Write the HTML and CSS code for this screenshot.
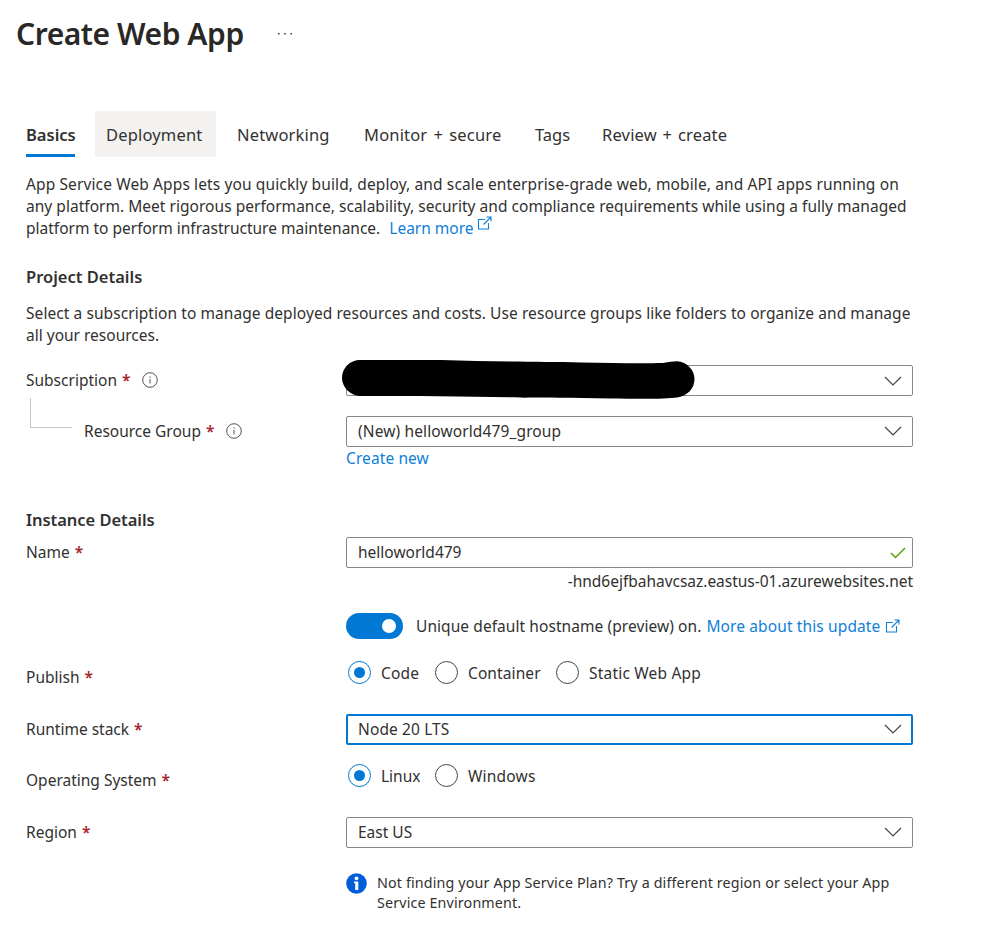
FILE: index.html
```html
<!DOCTYPE html>
<html lang="en">
<head>
    <meta charset="UTF-8">
    <meta name="viewport" content="width=device-width, initial-scale=1.0">
    <title>Create Web App</title>
    <link rel="stylesheet" href="styles.css">
</head>
<body>
    <header class="page-header">
        <h1>Create Web App</h1>
        <svg class="more" width="16" height="4" viewBox="0 0 16 4"><path d="M1 1h1.6v1.6H1zM7.2 1h1.6v1.6H7.2zM13.4 1h1.6v1.6h-1.6z" fill="#444"/></svg>
    </header>

    <nav class="tabs">
        <a class="tab active"><span>Basics</span></a>
        <a class="tab hover"><span>Deployment</span></a>
        <a class="tab networking"><span>Networking</span></a>
        <a class="tab monitor"><span>Monitor + secure</span></a>
        <a class="tab tags"><span>Tags</span></a>
        <a class="tab review"><span>Review + create</span></a>
    </nav>

    <main class="content">
        <p class="intro">
            <span class="wide">App Service Web Apps lets you quickly build, deploy, and scale enterprise-grade web, mobile, and API apps running on</span><br>
            <span class="snug">any platform. Meet rigorous performance, scalability, security and compliance requirements while using a fully managed</span><br>
            platform to perform infrastructure maintenance. <a class="link learn">Learn more <svg class="external raised" width="15" height="15" viewBox="0 0 15 15"><path d="M8 3.5H1.5v9.5h10V7M6.5 8.5l7.5-7.5M9.5 1H14v4.5"/></svg></a>
        </p>

        <h2 class="project-title">Project Details</h2>
        <p class="project-text">
            <span class="medium">Select a subscription to manage deployed resources and costs. Use resource groups like folders to organize and manage</span><br>
            all your resources.
        </p>

        <div class="row subscription">
            <div class="label">Subscription <span class="req">*</span>
                <svg class="info" width="16" height="16" viewBox="0 0 16 16"><circle cx="8" cy="8" r="7.3"/><path d="M8 7v4.5M8 4.3v1.4"/></svg>
            </div>
            <div class="select">
                <svg class="chevron" width="18" height="10" viewBox="0 0 18 10"><path d="M1 1l8 8 8-8"/></svg>
                <svg class="redacted" width="354" height="40" viewBox="0 0 354 40"><path d="M19 1L100 1C150 3 200 2.500 240 3.500C270 4 300 4.500 322 4C328 3 332 2.300 336 2.300C346 3 353.500 11 353.500 20C353.500 30 346 37 336 38.500C326 40 300 40 270 39.500C230 38.500 200 39 180 38.500C130 37.500 80 37 19 37C9 36.500 1 28 1 19C1 9 9 1 19 1Z"/></svg>
            </div>
        </div>

        <div class="row group">
            <div class="label nested">
                <span class="branch"></span>
                Resource Group <span class="req">*</span>
                <svg class="info" width="16" height="16" viewBox="0 0 16 16"><circle cx="8" cy="8" r="7.3"/><path d="M8 7v4.5M8 4.3v1.4"/></svg>
            </div>
            <div class="select">
                <span class="wide">(New) helloworld479_group</span>
                <svg class="chevron" width="18" height="10" viewBox="0 0 18 10"><path d="M1 1l8 8 8-8"/></svg>
            </div>
        </div>
        <a class="link create-new">Create new</a>

        <h2 class="instance-title">Instance Details</h2>
        <div class="row name">
            <div class="label">Name <span class="req">*</span></div>
            <div class="select">
                <span>helloworld479</span>
                <svg class="check" width="16" height="12" viewBox="0 0 16 12"><path d="M1 6l4.500 4.500L15 1"/></svg>
            </div>
        </div>
        <div class="suffix">-hnd6ejfbahavcsaz.eastus-01.azurewebsites.net</div>

        <div class="hostname">
            <span class="toggle"></span>
            <span class="medium">Unique default hostname (preview) on.</span>
            <a class="link update wide">More about this update</a>
            <svg class="external" width="15" height="15" viewBox="0 0 15 15"><path d="M8 3.5H1.5v9.5h10V7M6.5 8.5l7.5-7.5M9.5 1H14v4.5"/></svg>
        </div>

        <div class="row publish">
            <div class="label low">Publish <span class="req">*</span></div>
            <div class="radios">
                <span class="radio checked"></span><span class="option code">Code</span>
                <span class="radio"></span><span class="option container">Container</span>
                <span class="radio"></span><span class="option">Static Web App</span>
            </div>
        </div>

        <div class="row runtime">
            <div class="label">Runtime stack <span class="req">*</span></div>
            <div class="select focused">
                <span class="wide">Node 20 LTS</span>
                <svg class="chevron" width="18" height="10" viewBox="0 0 18 10"><path d="M1 1l8 8 8-8"/></svg>
            </div>
        </div>

        <div class="row os">
            <div class="label low">Operating System <span class="req">*</span></div>
            <div class="radios">
                <span class="radio checked"></span><span class="option linux">Linux</span>
                <span class="radio"></span><span class="option">Windows</span>
            </div>
        </div>

        <div class="row region">
            <div class="label">Region <span class="req">*</span></div>
            <div class="select">
                <span>East US</span>
                <svg class="chevron" width="18" height="10" viewBox="0 0 18 10"><path d="M1 1l8 8 8-8"/></svg>
            </div>
        </div>

        <div class="notice">
            <svg width="21" height="21" viewBox="0 0 21 21"><circle cx="10.5" cy="10.5" r="10.3" fill="#015cda"/><circle cx="10.5" cy="5.3" r="1.9" fill="#fff"/><path d="M8 8.500h4.300v8.500H9.200v-6.800H8z" fill="#fff"/></svg>
            <p>Not finding your App Service Plan? Try a different region or select your App<br>Service Environment.</p>
        </div>
    </main>
</body>
</html>
```
FILE: styles.css
```css
* {
    box-sizing: border-box;
}

body {
    margin: 0;
    background-color: #fff;
    color: #323130;
    font-family: "Noto Sans", "Open Sans", sans-serif;
    font-size: 15.5px;
    line-height: 22.2px;
    white-space: nowrap;
}

h1,
h2,
p {
    margin: 0;
}

.page-header {
    display: flex;
    align-items: center;
    height: 67px;
    padding-left: 16px;
}

h1 {
    width: 261px;
    font-size: 30px;
    font-weight: 600;
    line-height: 40px;
    letter-spacing: -0.45px;
    color: #292827;
}

.tabs {
    display: flex;
    height: 46px;
    margin-top: 44px;
    padding-left: 26px;
    font-size: 16.5px;
    letter-spacing: 0.17px;
}

.tab {
    display: flex;
    align-items: center;
    height: 46px;
    padding-top: 2px;
}

.tab.active {
    width: 49px;
    margin-right: 20px;
    border-bottom: 3px solid #0078d4;
    padding-top: 5px;
    font-weight: 600;
    letter-spacing: 0;
}

.tab.hover {
    width: 121px;
    padding-left: 11px;
    background-color: #f3f2f1;
}

.networking {
    width: 127px;
    margin-left: 21px;
}

.monitor {
    width: 171px;
    word-spacing: 1.7px;
}

.tags {
    width: 67px;
    letter-spacing: 0;
}

.review {
    word-spacing: 1.3px;
}

.content {
    width: 913px;
    padding-left: 26px;
}

.wide {
    letter-spacing: 0.12px;
}

.medium {
    letter-spacing: 0.07px;
}

.snug {
    letter-spacing: 0.03px;
}

.intro {
    margin-top: 16px;
}

.link {
    color: #0f7fd8;
}

.learn {
    margin-left: 5px;
}

.external {
    fill: none;
    stroke: #0f7fd8;
    stroke-width: 1.1;
}

.raised {
    vertical-align: baseline;
    transform: translate(-1px, -3px);
}

h2 {
    font-size: 16.5px;
    font-weight: 600;
    line-height: 22px;
}

.project-title {
    margin-top: 26.5px;
}

.project-text {
    margin-top: 13.9px;
}

.row {
    display: flex;
    align-items: center;
    height: 31px;
}

.label {
    display: flex;
    align-items: center;
    width: 320px;
}

.label.low {
    padding-top: 8px;
}

.req {
    margin-left: 5px;
    font-weight: 600;
    color: #a4262c;
}

.info {
    margin-left: 12px;
    fill: none;
    stroke: #555;
}

.select {
    position: relative;
    display: flex;
    align-items: center;
    width: 567px;
    height: 31px;
    padding: 0 10px 0 11px;
    border: 1px solid #8a8886;
    border-radius: 2px;
}

.select.focused {
    padding: 0 9px 0 10px;
    border: 2px solid #0078d4;
}

.chevron {
    margin-left: auto;
    fill: none;
    stroke: #444;
    stroke-width: 1.2;
}

.check {
    margin-left: auto;
    margin-right: -4px;
    fill: none;
    stroke: #57a300;
    stroke-width: 1.5;
}

.redacted {
    position: absolute;
    left: -6px;
    top: -7px;
}

.subscription {
    margin-top: 18.6px;
}

.group {
    margin-top: 19.5px;
}

.branch {
    width: 42px;
    height: 30px;
    margin: -36px 12px 0 4px;
    border-left: 1px solid #c8c6c4;
    border-bottom: 1px solid #c8c6c4;
}

.create-new {
    display: block;
    margin-left: 320px;
    letter-spacing: 0.1px;
}

.instance-title {
    margin-top: 40.3px;
    letter-spacing: -0.05px;
}

.name {
    margin-top: 6px;
}

.suffix {
    margin-top: 2px;
    text-align: right;
    letter-spacing: -0.02px;
}

.hostname {
    display: flex;
    align-items: center;
    height: 26px;
    margin: 20.8px 0 0 320px;
}

.toggle {
    width: 57px;
    height: 26px;
    margin-right: 13px;
    padding: 6px 7px 6px 36px;
    border-radius: 13px;
    background-color: #0078d4;
}

.toggle::before {
    content: "";
    display: block;
    width: 14px;
    height: 14px;
    border-radius: 50%;
    background-color: #fff;
}

.update {
    margin: 0 5px;
}

.radios {
    display: flex;
    align-items: center;
    padding-left: 2px;
}

.radio {
    display: flex;
    align-items: center;
    justify-content: center;
    width: 23px;
    height: 23px;
    margin-right: 10px;
    border: 1px solid #484644;
    border-radius: 50%;
}

.radio.checked {
    border-color: #0078d4;
}

.radio.checked::before {
    content: "";
    width: 11px;
    height: 11px;
    border-radius: 50%;
    background-color: #0078d4;
}

.option {
    letter-spacing: 0.2px;
}

.code,
.linux {
    width: 54px;
}

.linux {
    letter-spacing: 0;
}

.container {
    width: 88px;
    letter-spacing: 0.1px;
}

.publish {
    margin-top: 18.3px;
}

.runtime {
    margin-top: 25.7px;
}

.os {
    margin-top: 15.3px;
}

.region {
    margin-top: 25.7px;
}

.notice {
    display: flex;
    gap: 10px;
    margin: 25px 0 0 320px;
    font-size: 14.3px;
    line-height: 20px;
    letter-spacing: 0.14px;
}
```
